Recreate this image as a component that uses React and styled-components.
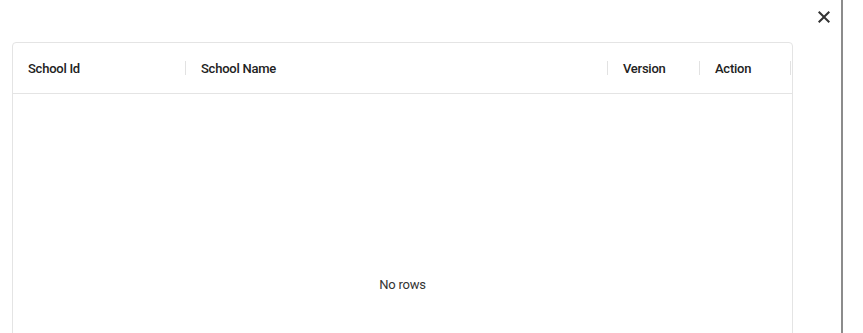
import React from "react";
import styled, { createGlobalStyle } from "styled-components";

const Global = createGlobalStyle`
  html, body { margin: 0; padding: 0; background: #ffffff; overflow: hidden; }
  body { font-family: Roboto, "Liberation Sans", Arial, sans-serif; }
`;

const Panel = styled.div`
  width: 841px;
  height: 333px;
  border-right: 2px solid #8c8c8c;
  display: flex;
  flex-direction: column;
  overflow: hidden;
`;

const TopBar = styled.div`
  height: 42px;
  flex: none;
  display: flex;
  justify-content: flex-end;
  align-items: flex-start;
  padding-right: 5px;
`;

const CloseButton = styled.button`
  width: 24px;
  height: 24px;
  margin-top: 5px;
  padding: 0;
  border: 0;
  background: transparent;
  display: flex;
  align-items: center;
  justify-content: center;
  color: #333;
  cursor: pointer;
`;

const Grid = styled.div`
  margin-left: 12px;
  width: 779px;
  border: 1px solid #e4e4e4;
  border-radius: 4px;
  display: flex;
  flex-direction: column;
`;

const HeaderRow = styled.div`
  display: grid;
  grid-template-columns: 173px 422px 92px 91px;
  height: 50px;
  border-bottom: 1px solid #e4e4e4;
`;

const HeaderCell = styled.div`
  display: flex;
  align-items: center;
  padding-left: ${(p) => p.$pad}px;
  font-size: 13px;
  font-weight: 500;
  letter-spacing: -0.25px;
  color: #222;
`;

const Title = styled.span`
  flex: 1;
`;

const Separator = styled.span`
  width: 1px;
  height: 14px;
  background: #e2e2e2;
`;

const Body = styled.div`
  height: 380px;
  display: flex;
  align-items: center;
  justify-content: center;
  font-size: 13px;
  letter-spacing: -0.25px;
  color: #333;
`;

const columns = [
  { title: "School Id", pad: 15 },
  { title: "School Name", pad: 15 },
  { title: "Version", pad: 15 },
  { title: "Action", pad: 15 },
];

export default function App() {
  return (
    <>
      <Global />
      <Panel>
        <TopBar>
          <CloseButton aria-label="close">
            <svg width="24" height="24" viewBox="0 0 24 24">
              <path
                fill="currentColor"
                d="M18 7.41 16.59 6 12 10.59 7.41 6 6 7.41 10.59 12 6 16.59 7.41 18 12 13.41 16.59 18 18 16.59 13.41 12z"
              />
            </svg>
          </CloseButton>
        </TopBar>
        <Grid>
          <HeaderRow>
            {columns.map((c) => (
              <HeaderCell key={c.title} $pad={c.pad}>
                <Title>{c.title}</Title>
                <Separator />
              </HeaderCell>
            ))}
          </HeaderRow>
          <Body>No rows</Body>
        </Grid>
      </Panel>
    </>
  );
}
